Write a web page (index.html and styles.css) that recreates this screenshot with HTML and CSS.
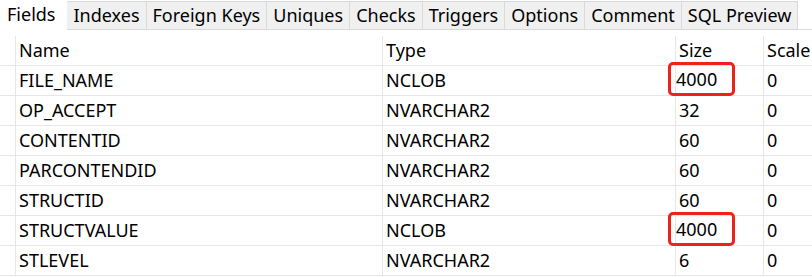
FILE: index.html
```html
<!DOCTYPE html>
<html lang="en">
<head>
    <meta charset="UTF-8">
    <title>Design Table</title>
    <link rel="stylesheet" href="styles.css">
</head>
<body>
    <div class="tabs">
        <div class="tab active">Fields</div>
        <div class="tab">Indexes</div>
        <div class="tab">Foreign Keys</div>
        <div class="tab">Uniques</div>
        <div class="tab">Checks</div>
        <div class="tab">Triggers</div>
        <div class="tab">Options</div>
        <div class="tab">Comment</div>
        <div class="tab">SQL Preview</div>
        <div class="tab-rest"></div>
    </div>
    <div class="grid">
        <div class="row head">
            <div class="cell gutter"></div>
            <div class="cell">Name</div>
            <div class="cell">Type</div>
            <div class="cell">Size</div>
            <div class="cell">Scale</div>
        </div>
        <div class="row">
            <div class="cell gutter"></div>
            <div class="cell">FILE_NAME</div>
            <div class="cell">NCLOB</div>
            <div class="cell"><span class="mark">4000</span></div>
            <div class="cell">0</div>
        </div>
        <div class="row">
            <div class="cell gutter"></div>
            <div class="cell">OP_ACCEPT</div>
            <div class="cell">NVARCHAR2</div>
            <div class="cell">32</div>
            <div class="cell">0</div>
        </div>
        <div class="row">
            <div class="cell gutter"></div>
            <div class="cell">CONTENTID</div>
            <div class="cell">NVARCHAR2</div>
            <div class="cell">60</div>
            <div class="cell">0</div>
        </div>
        <div class="row">
            <div class="cell gutter"></div>
            <div class="cell">PARCONTENDID</div>
            <div class="cell">NVARCHAR2</div>
            <div class="cell">60</div>
            <div class="cell">0</div>
        </div>
        <div class="row">
            <div class="cell gutter"></div>
            <div class="cell">STRUCTID</div>
            <div class="cell">NVARCHAR2</div>
            <div class="cell">60</div>
            <div class="cell">0</div>
        </div>
        <div class="row">
            <div class="cell gutter"></div>
            <div class="cell">STRUCTVALUE</div>
            <div class="cell">NCLOB</div>
            <div class="cell"><span class="mark">4000</span></div>
            <div class="cell">0</div>
        </div>
        <div class="row">
            <div class="cell gutter"></div>
            <div class="cell">STLEVEL</div>
            <div class="cell">NVARCHAR2</div>
            <div class="cell">6</div>
            <div class="cell">0</div>
        </div>
    </div>
</body>
</html>
```

FILE: styles.css
```css
body {
    margin: 0;
    background-color: #fff;
    color: #000;
    font-family: 'Noto Sans', 'Open Sans', sans-serif;
    font-size: 18px;
    overflow: hidden;
}
.tabs {
    display: flex;
    height: 30px;
    padding-top: 1px;
    box-sizing: border-box;
}
.tab {
    padding: 0 6px;
    line-height: 27px;
    font-size: 18px;
    background-color: #f0f0f0;
    border: 1px solid #d9d9d9;
    border-left: none;
    white-space: nowrap;
}
.tab.active {
    background-color: #fff;
    border: none;
    padding: 0 12px 0 7px;
}
.tab-rest {
    flex: 1;
    border-bottom: 1px solid #d9d9d9;
}
.grid {
    margin-top: 6px;
}
.row {
    display: grid;
    grid-template-columns: 15px 367px 293px 88px 1fr;
    height: 30px;
    border-bottom: 1px solid #e6e6e6;
    box-sizing: border-box;
}
.cell {
    line-height: 29px;
    padding-left: 3px;
    border-left: 1px solid #e6e6e6;
    white-space: nowrap;
    position: relative;
}
.cell.gutter {
    border-left: none;
    padding-left: 0;
}
.mark {
    position: absolute;
    left: -8px;
    top: -4px;
    width: 56px;
    height: 28px;
    padding-left: 5px;
    border: 3px solid #f0211b;
    border-radius: 5px;
    line-height: 28px;
}
```
